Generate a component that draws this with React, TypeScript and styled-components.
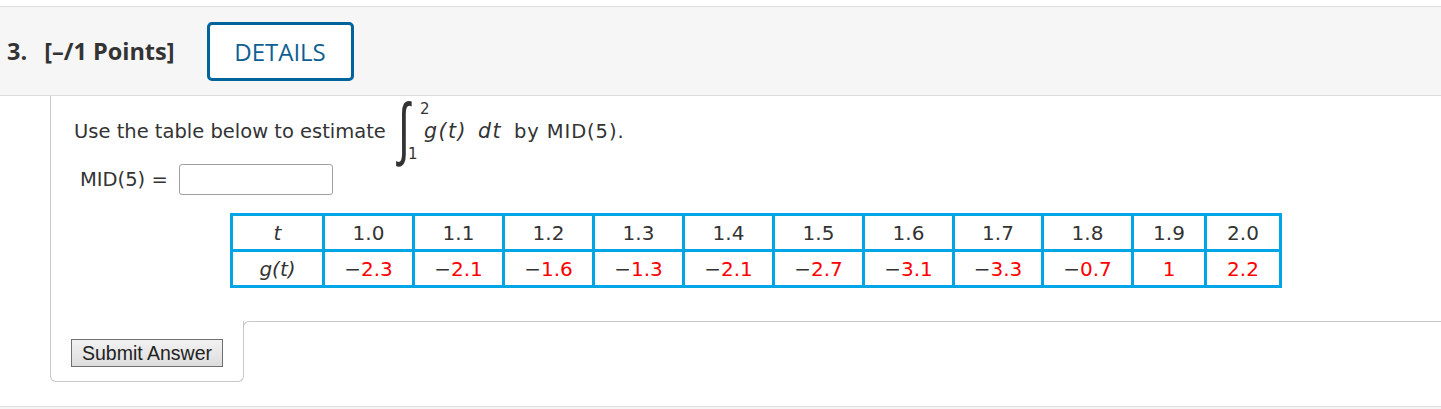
import styled, { createGlobalStyle } from 'styled-components';

const COLUMNS = [
	{ t: '1.0', g: '−2.3', w: 90 },
	{ t: '1.1', g: '−2.1', w: 90 },
	{ t: '1.2', g: '−1.6', w: 90 },
	{ t: '1.3', g: '−1.3', w: 90 },
	{ t: '1.4', g: '−2.1', w: 90 },
	{ t: '1.5', g: '−2.7', w: 90 },
	{ t: '1.6', g: '−3.1', w: 90 },
	{ t: '1.7', g: '−3.3', w: 89 },
	{ t: '1.8', g: '−0.7', w: 90 },
	{ t: '1.9', g: '1', w: 73 },
	{ t: '2.0', g: '2.2', w: 75 },
];

const GlobalStyle = createGlobalStyle`
	body {
		margin: 0;
		background: #fff;
		color: #333;
		font-family: "DejaVu Sans", Verdana, sans-serif;
	}
`;

const Page = styled.div`
	padding-top: 6px;
	width: 1441px;
`;

const Header = styled.header`
	display: flex;
	align-items: center;
	height: 88px;
	padding-left: 7px;
	background: #f6f6f6;
	border-top: 1px solid #dddddd;
	border-bottom: 1px solid #dddddd;
	font-family: "Open Sans", sans-serif;
`;

const Number = styled.span`
	font-size: 23.5px;
	font-weight: 700;
	color: #333;
	margin-right: 17px;
`;

const Points = styled.span`
	font-size: 23.5px;
	font-weight: 700;
	color: #333;
	margin-right: 32px;
`;

const DetailsButton = styled.button`
	box-sizing: border-box;
	width: 147px;
	height: 59px;
	margin-top: 1px;
	background: #fff;
	border: 3px solid #00639a;
	border-radius: 5px;
	color: #0f5f92;
	font-family: "Open Sans", sans-serif;
	font-size: 24px;
	cursor: pointer;
`;

const Question = styled.section`
	margin-left: 50px;
	border-left: 1px solid #c8c8c8;
	padding: 4px 0 33px 23px;
`;

const Prompt = styled.div`
	display: flex;
	align-items: center;
	height: 62px;
	font-size: 19.5px;
`;

const Integral = styled.span`
	position: relative;
	display: inline-flex;
	align-items: center;
	width: 26px;
	height: 62px;
	margin-left: 12px;
`;

const IntegralSign = styled.span`
	font-family: "DejaVu Sans", sans-serif;
	font-size: 42px;
	font-weight: 200;
	line-height: 1;
	transform: translate(0, -2px) scaleY(1.65);
	color: #333;
`;

const Limit = styled.span<{ $top?: boolean }>`
	position: absolute;
	font-size: 15px;
	line-height: 1;
	left: ${(p) => (p.$top ? '22px' : '10px')};
	${(p) => (p.$top ? 'top: 2px;' : 'bottom: 0;')}
`;

const Italic = styled.span<{ $gap?: number }>`
	font-style: italic;
	font-size: 20.5px;
	letter-spacing: 1.5px;
	margin-right: ${(p) => p.$gap ?? 0}px;
`;

const Spaced = styled.span`
	letter-spacing: 0.9px;
`;

const AnswerRow = styled.div`
	display: flex;
	align-items: center;
	gap: 11px;
	margin: 2px 0 0 6px;
	font-size: 19.5px;
`;

const AnswerInput = styled.input`
	box-sizing: border-box;
	width: 154px;
	height: 31px;
	border: 1px solid #a0a0a0;
	border-radius: 3px;
	background: #fff;
`;

const DataTable = styled.table`
	margin: 18px 0 0 156px;
	border-collapse: collapse;
	table-layout: fixed;
	border: 3px solid #00a5e6;
	font-size: 20px;
`;

const Cell = styled.td<{ $head?: boolean; $w: number }>`
	box-sizing: border-box;
	width: ${(p) => p.$w}px;
	border: 3px solid #00a5e6;
	height: 36px;
	padding: 0;
	text-align: center;
	white-space: nowrap;
	font-style: ${(p) => (p.$head ? 'italic' : 'normal')};
`;

const Red = styled.span`
	color: #ff0000;
`;

const BottomRow = styled.div`
	display: flex;
	margin-left: 50px;
`;

const SubmitTab = styled.div`
	box-sizing: border-box;
	width: 194px;
	height: 61px;
	padding: 18px 0 0 20px;
	border: 1px solid #c8c8c8;
	border-top: none;
	border-radius: 0 0 6px 6px;
`;

const TabFiller = styled.div`
	flex: 1;
	height: 12px;
	margin-left: -1px;
	border-top: 1px solid #c8c8c8;
	border-left: 1px solid #c8c8c8;
	border-top-left-radius: 6px;
`;

const SubmitButton = styled.button`
	box-sizing: border-box;
	width: 152px;
	height: 28px;
	padding: 0;
	border: 1px solid #707070;
	background: linear-gradient(#f2f2f2, #dddddd);
	color: #222;
	font-family: "Liberation Sans", Arial, sans-serif;
	font-size: 19.5px;
`;

const NextHeader = styled.div`
	margin-top: 24px;
	height: 3px;
	background: #f6f6f6;
	border-top: 1px solid #dddddd;
`;

function renderValue(v: string) {
	if (v.startsWith('−')) {
		return (
			<>
				−<Red>{v.slice(1)}</Red>
			</>
		);
	}
	return <Red>{v}</Red>;
}

export default function App() {
	return (
		<>
			<GlobalStyle />
			<Page>
				<Header>
					<Number>3.</Number>
					<Points>[–/1 Points]</Points>
					<DetailsButton>DETAILS</DetailsButton>
				</Header>
				<Question>
					<Prompt>
						Use the table below to estimate
						<Integral>
							<IntegralSign>∫</IntegralSign>
							<Limit $top>2</Limit>
							<Limit>1</Limit>
						</Integral>
						<Italic $gap={11}>g(t)</Italic>
						<Italic $gap={12}>dt</Italic>
						<Spaced>by MID(5).</Spaced>
					</Prompt>
					<AnswerRow>
						MID(5) =
						<AnswerInput type="text" />
					</AnswerRow>
					<DataTable>
						<tbody>
							<tr>
								<Cell $head $w={92}>t</Cell>
								{COLUMNS.map((c) => (
									<Cell key={c.t} $w={c.w}>{c.t}</Cell>
								))}
							</tr>
							<tr>
								<Cell $head $w={92}>g(t)</Cell>
								{COLUMNS.map((c) => (
									<Cell key={c.t} $w={c.w}>{renderValue(c.g)}</Cell>
								))}
							</tr>
						</tbody>
					</DataTable>
				</Question>
				<BottomRow>
					<SubmitTab>
						<SubmitButton>Submit Answer</SubmitButton>
					</SubmitTab>
					<TabFiller />
				</BottomRow>
				<NextHeader />
			</Page>
		</>
	);
}
